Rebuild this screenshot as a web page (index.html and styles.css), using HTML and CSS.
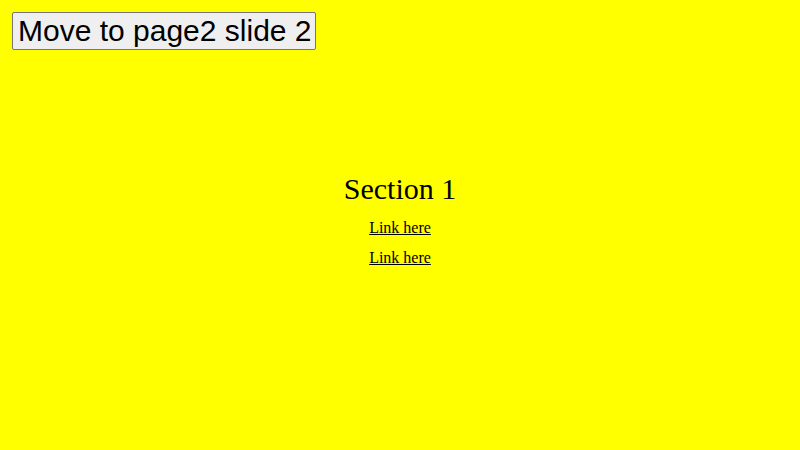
FILE: index.html
```html
<!DOCTYPE html>
<html>
<head>
<meta charset="utf-8">
<link rel="stylesheet" href="styles.css">
</head>
<body>
<button class="nav-btn">Move to page2 slide 2</button>
<main class="section">
  <h1 class="title">Section 1</h1>
  <a class="link" href="#">Link here</a>
  <a class="link" href="#">Link here</a>
</main>
</body>
</html>
```
FILE: styles.css
```css
html, body {
  margin: 0;
  height: 100%;
}
body {
  background: #ffff00;
  font-family: "Liberation Serif", "Times New Roman", serif;
}
.nav-btn {
  position: fixed;
  top: 12px;
  left: 12px;
  height: 38px;
  padding: 0 3px 0 5px;
  white-space: nowrap;
  font-family: "Liberation Sans", Arial, sans-serif;
  font-size: 30px;
  color: #000;
  background: #efefef;
  border: 1px solid #767676;
  border-radius: 2px;
}
.section {
  box-sizing: border-box;
  height: 100%;
  padding-bottom: 6px;
  display: flex;
  flex-direction: column;
  align-items: center;
  justify-content: center;
}
.title {
  margin: 0 0 6px;
  font-size: 30px;
  font-weight: normal;
  line-height: 36px;
}
.link {
  color: #000;
  font-size: 16px;
  line-height: 30px;
}
```
